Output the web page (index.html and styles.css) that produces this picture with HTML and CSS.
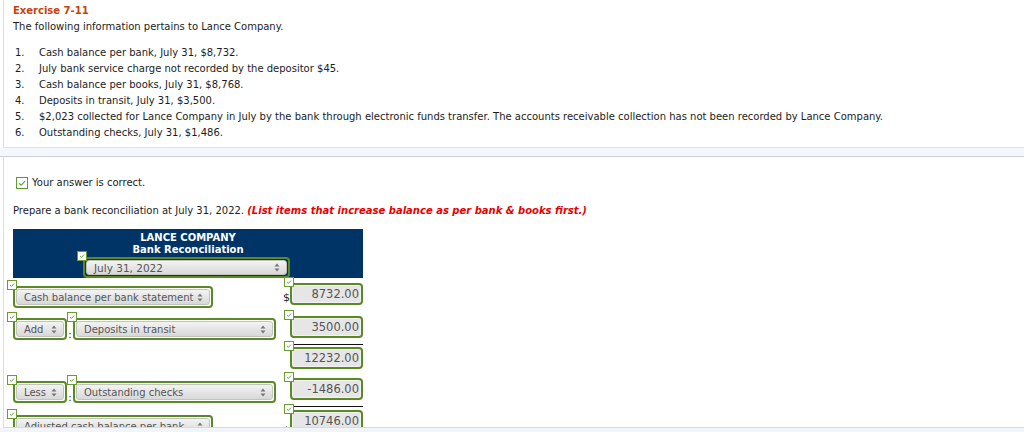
FILE: index.html
```html
<!DOCTYPE html>
<html>
<head>
<meta charset="utf-8">
<link rel="stylesheet" href="styles.css">
</head>
<body>
<section class="info">
  <h1 class="title">Exercise 7-11</h1>
  <p class="intro">The following information pertains to Lance Company.</p>
  <ol class="facts">
    <li><span class="n">1.</span><span>Cash balance per bank, July 31, $8,732.</span></li>
    <li><span class="n">2.</span><span>July bank service charge not recorded by the depositor $45.</span></li>
    <li><span class="n">3.</span><span>Cash balance per books, July 31, $8,768.</span></li>
    <li><span class="n">4.</span><span>Deposits in transit, July 31, $3,500.</span></li>
    <li><span class="n">5.</span><span>$2,023 collected for Lance Company in July by the bank through electronic funds transfer. The accounts receivable collection has not been recorded by Lance Company.</span></li>
    <li><span class="n">6.</span><span>Outstanding checks, July 31, $1,486.</span></li>
  </ol>
</section>
<div class="band"></div>
<section class="answer">
  <p class="correct"><span class="okbox"><svg width="10" height="10" viewBox="0 0 10 10"><path d="M2 5.2 L4.2 7.2 L8.2 2.8" fill="none" stroke="#5fa83a" stroke-width="1.2"/></svg></span>Your answer is correct.</p>
  <p class="prompt">Prepare a bank reconciliation at July 31, 2022. <em class="hint">(List items that increase balance as per bank &amp; books first.)</em></p>

  <div class="recon">
    <div class="recon-head">
      <div class="co">LANCE COMPANY</div>
      <div class="co">Bank Reconciliation</div>
      <div class="date-row">
        <span class="fld w207 dark">
          <i class="tick"><svg width="8" height="8" viewBox="0 0 8 8"><path d="M2 4.2 L3.4 5.4 L6 2.6" fill="none" stroke="#5fa83a" stroke-width="1"/></svg></i>
          <span class="sel big"><span>July 31, 2022</span><svg class="arr" width="6" height="9" viewBox="0 0 6 9"><path d="M0.5 3.5 L3 0.5 L5.5 3.5Z M0.5 5.5 L3 8.5 L5.5 5.5Z" fill="#777"/></svg></span>
        </span>
      </div>
    </div>

    <div class="row r1">
      <div class="lhs">
        <span class="fld w200">
          <i class="tick"><svg width="8" height="8" viewBox="0 0 8 8"><path d="M2 4.2 L3.4 5.4 L6 2.6" fill="none" stroke="#5fa83a" stroke-width="1"/></svg></i>
          <span class="sel"><span>Cash balance per bank statement</span><svg class="arr" width="6" height="9" viewBox="0 0 6 9"><path d="M0.5 3.5 L3 0.5 L5.5 3.5Z M0.5 5.5 L3 8.5 L5.5 5.5Z" fill="#777"/></svg></span>
        </span>
      </div>
      <div class="amt">
        <span class="dollar">$</span>
        <span class="fld num">
          <i class="tick"><svg width="8" height="8" viewBox="0 0 8 8"><path d="M2 4.2 L3.4 5.4 L6 2.6" fill="none" stroke="#5fa83a" stroke-width="1"/></svg></i>
          8732.00
        </span>
      </div>
    </div>

    <div class="row r2">
      <div class="lhs">
        <span class="fld w54">
          <i class="tick"><svg width="8" height="8" viewBox="0 0 8 8"><path d="M2 4.2 L3.4 5.4 L6 2.6" fill="none" stroke="#5fa83a" stroke-width="1"/></svg></i>
          <span class="sel"><span>Add</span><svg class="arr" width="6" height="9" viewBox="0 0 6 9"><path d="M0.5 3.5 L3 0.5 L5.5 3.5Z M0.5 5.5 L3 8.5 L5.5 5.5Z" fill="#777"/></svg></span>
        </span>
        <span class="colon">:</span>
        <span class="fld w203">
          <i class="tick"><svg width="8" height="8" viewBox="0 0 8 8"><path d="M2 4.2 L3.4 5.4 L6 2.6" fill="none" stroke="#5fa83a" stroke-width="1"/></svg></i>
          <span class="sel"><span>Deposits in transit</span><svg class="arr" width="6" height="9" viewBox="0 0 6 9"><path d="M0.5 3.5 L3 0.5 L5.5 3.5Z M0.5 5.5 L3 8.5 L5.5 5.5Z" fill="#777"/></svg></span>
        </span>
      </div>
      <div class="amt">
        <span class="fld num">
          <i class="tick"><svg width="8" height="8" viewBox="0 0 8 8"><path d="M2 4.2 L3.4 5.4 L6 2.6" fill="none" stroke="#5fa83a" stroke-width="1"/></svg></i>
          3500.00
        </span>
      </div>
    </div>

    <div class="row r3">
      <div class="lhs"></div>
      <div class="amt total">
        <span class="fld num">
          <i class="tick"><svg width="8" height="8" viewBox="0 0 8 8"><path d="M2 4.2 L3.4 5.4 L6 2.6" fill="none" stroke="#5fa83a" stroke-width="1"/></svg></i>
          12232.00
        </span>
      </div>
    </div>

    <div class="row r4">
      <div class="lhs">
        <span class="fld w54">
          <i class="tick"><svg width="8" height="8" viewBox="0 0 8 8"><path d="M2 4.2 L3.4 5.4 L6 2.6" fill="none" stroke="#5fa83a" stroke-width="1"/></svg></i>
          <span class="sel"><span>Less</span><svg class="arr" width="6" height="9" viewBox="0 0 6 9"><path d="M0.5 3.5 L3 0.5 L5.5 3.5Z M0.5 5.5 L3 8.5 L5.5 5.5Z" fill="#777"/></svg></span>
        </span>
        <span class="colon">:</span>
        <span class="fld w203">
          <i class="tick"><svg width="8" height="8" viewBox="0 0 8 8"><path d="M2 4.2 L3.4 5.4 L6 2.6" fill="none" stroke="#5fa83a" stroke-width="1"/></svg></i>
          <span class="sel"><span>Outstanding checks</span><svg class="arr" width="6" height="9" viewBox="0 0 6 9"><path d="M0.5 3.5 L3 0.5 L5.5 3.5Z M0.5 5.5 L3 8.5 L5.5 5.5Z" fill="#777"/></svg></span>
        </span>
      </div>
      <div class="amt">
        <span class="fld num">
          <i class="tick"><svg width="8" height="8" viewBox="0 0 8 8"><path d="M2 4.2 L3.4 5.4 L6 2.6" fill="none" stroke="#5fa83a" stroke-width="1"/></svg></i>
          -1486.00
        </span>
      </div>
    </div>

    <div class="row r5">
      <div class="lhs">
        <span class="fld w200">
          <i class="tick"><svg width="8" height="8" viewBox="0 0 8 8"><path d="M2 4.2 L3.4 5.4 L6 2.6" fill="none" stroke="#5fa83a" stroke-width="1"/></svg></i>
          <span class="sel"><span>Adjusted cash balance per bank</span><svg class="arr" width="6" height="9" viewBox="0 0 6 9"><path d="M0.5 3.5 L3 0.5 L5.5 3.5Z M0.5 5.5 L3 8.5 L5.5 5.5Z" fill="#777"/></svg></span>
        </span>
      </div>
      <div class="amt total">
        <span class="dollar low">$</span>
        <span class="fld num">
          <i class="tick"><svg width="8" height="8" viewBox="0 0 8 8"><path d="M2 4.2 L3.4 5.4 L6 2.6" fill="none" stroke="#5fa83a" stroke-width="1"/></svg></i>
          10746.00
        </span>
      </div>
    </div>
  </div>
</section>
<div class="foot"></div>
</body>
</html>
```
FILE: styles.css
```css
html, body {
  margin: 0;
  padding: 0;
  background: #fff;
}
body {
  font-family: "DejaVu Sans", Verdana, sans-serif;
  font-size: 10px;
  color: #1c1c1c;
  width: 1024px;
  height: 432px;
  overflow: hidden;
}
p { margin: 0; }

.info {
  margin-left: 3px;
  border-left: 1px solid #d6dde6;
  border-bottom: 1px solid #dde2e8;
  padding: 3px 0 6px 9px;
}
.title {
  margin: 0;
  font-size: 10px;
  font-weight: bold;
  color: #c9420c;
  line-height: 16px;
}
.intro { line-height: 16px; }
.facts {
  list-style: none;
  margin: 10px 0 0;
  padding: 0 0 0 2px;
}
.facts li {
  display: flex;
  line-height: 16px;
}
.facts .n { width: 24px; flex: none; }

.band {
  height: 8px;
  background: #f4f7fb;
  border-bottom: 1px solid #c9d1dd;
}

.answer {
  margin-left: 3px;
  border-left: 1px solid #d6dde6;
  border-bottom: 1px solid #d5dbe2;
  padding: 18px 0 0 9px;
  height: 271px;
  box-sizing: border-box;
  overflow: hidden;
}
.foot {
  height: 4px;
  background: #f1f4f8;
}

.correct {
  display: flex;
  align-items: center;
  gap: 4px;
  line-height: 16px;
  padding-left: 3px;
}
.okbox {
  width: 12px;
  height: 12px;
  box-sizing: border-box;
  border: 1px solid #5b9a2c;
  display: flex;
  align-items: center;
  justify-content: center;
  background: #fff;
}
.prompt {
  margin-top: 12px;
  line-height: 16px;
}
.hint {
  color: #e80000;
  font-weight: bold;
  font-style: italic;
}

.recon {
  width: 350px;
  margin-top: 10px;
}
.recon-head {
  background: #003366;
  height: 49px;
  padding-top: 3px;
  box-sizing: border-box;
  color: #fff;
  font-weight: bold;
  text-align: center;
  line-height: 12px;
}
.date-row {
  margin-top: 1px;
  padding-left: 70px;
  text-align: left;
  display: flex;
}

.fld {
  position: relative;
  display: block;
  box-sizing: border-box;
  height: 22px;
  border: 2px solid #5b8a24;
  border-radius: 4px;
  padding: 1px;
}
.fld.dark { height: 21px; }
.w200 { width: 200px; }
.w207 { width: 207px; }
.w54 { width: 54px; }
.w203 { width: 203px; }

.sel {
  display: flex;
  align-items: center;
  justify-content: space-between;
  height: 100%;
  box-sizing: border-box;
  border: 1px solid #c2c2c2;
  border-radius: 3px;
  background: linear-gradient(#f3f3f3, #d8d8d8);
  padding: 0 6px 0 7px;
  color: #555;
  font-weight: normal;
  font-size: 10px;
  white-space: nowrap;
  overflow: hidden;
}
.sel.big { font-size: 10.5px; }
.arr { flex: none; }

.tick {
  position: absolute;
  left: -8px;
  top: -8px;
  width: 10px;
  height: 10px;
  box-sizing: border-box;
  border: 1px solid #6a9c34;
  background: #fff;
  display: flex;
  align-items: flex-start;
  justify-content: center;
}

.fld.num {
  width: 73px;
  background: #e6e6e6;
  box-shadow: inset 0 0 0 1px #f2f2f2;
  text-align: right;
  padding: 0 2px 0 0;
  line-height: 18px;
  color: #555;
  font-size: 11.5px;
}

.row {
  display: flex;
  align-items: flex-start;
}
.lhs {
  width: 277px;
  flex: none;
  display: flex;
  align-items: flex-end;
}
.amt {
  width: 73px;
  flex: none;
  position: relative;
}
.amt.total {
  border-top: 1px solid #111;
}
.dollar {
  position: absolute;
  left: -7px;
  top: 9px;
  line-height: 12px;
  font-size: 11px;
  color: #222;
}
.dollar.low { top: 18px; }

.colon {
  width: 6px;
  text-align: center;
  line-height: 10px;
  color: #222;
}

.r1 { margin-top: 5px; }
.r1 .lhs { padding-top: 3px; }
.r2 { margin-top: 8px; }
.r2 .lhs { padding-top: 2px; }
.r3 { margin-top: 4px; }
.r3 .amt { padding-top: 2px; }
.r4 { margin-top: 9px; }
.r4 .lhs { padding-top: 3px; }
.r5 { margin-top: 3px; }
.r5 .amt { padding-top: 3px; }
.r5 .lhs { padding-top: 9px; }
```
